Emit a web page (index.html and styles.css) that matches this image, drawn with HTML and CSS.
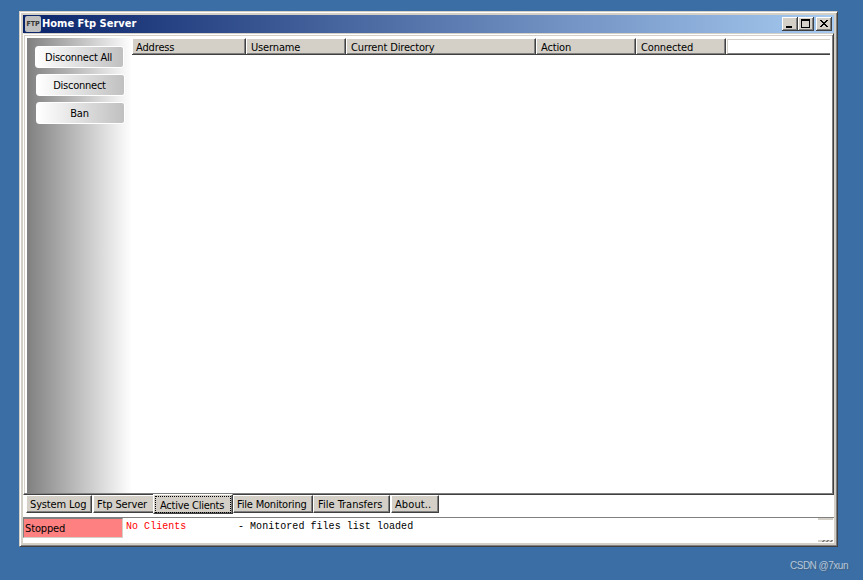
FILE: index.html
```
<!DOCTYPE html>
<html lang="en">
<head>
<meta charset="utf-8">
<title>Home Ftp Server</title>
<link rel="stylesheet" href="styles.css">
</head>
<body>
    <div class="window">
        <div class="titlebar">
            <span class="appicon">FTP</span>
            <h1>Home Ftp Server</h1>
            <button class="winbtn" aria-label="Minimize"><svg width="16" height="14" shape-rendering="crispEdges"><path d="M4 9h6v2H4z"/></svg></button>
            <button class="winbtn" aria-label="Maximize"><svg width="16" height="14" shape-rendering="crispEdges"><path d="M3 2h9v9H3zM4 4v6h7V4z" fill-rule="evenodd"/></svg></button>
            <button class="winbtn close" aria-label="Close"><svg width="16" height="14" shape-rendering="crispEdges"><path d="M4 3h2v1h1v1h2V4h1V3h2v1h-1v1h-1v1H9v1h1v1h1v1h1v1h-2V9H9V8H7v1H6v1H4V9h1V8h1V7h1V6H6V5H5V4H4z"/></svg></button>
        </div>
        <div class="panel">
            <div class="sidebar">
                <button class="sidebtn first">Disconnect All</button>
                <button class="sidebtn">Disconnect</button>
                <button class="sidebtn">Ban</button>
            </div>
            <div class="list">
                <div class="listhead">
                    <span class="col address">Address</span>
                    <span class="col username">Username</span>
                    <span class="col directory">Current Directory</span>
                    <span class="col action">Action</span>
                    <span class="col connected">Connected</span>
                    <span class="rest"></span>
                </div>
            </div>
        </div>
        <div class="tabs">
            <span class="tab log">System Log</span>
            <span class="tab server">Ftp Server</span>
            <span class="tab active"><span class="focus">Active Clients</span></span>
            <span class="tab monitoring">File Monitoring</span>
            <span class="tab transfers">File Transfers</span>
            <span class="tab about">About..</span>
        </div>
        <div class="statusbar">
            <span class="state">Stopped</span>
            <span class="clients">No Clients</span>
            <span class="message">- Monitored files list loaded</span>
            <span class="grip"><svg width="15" height="2" shape-rendering="crispEdges"><path fill="#d4d0c8" d="M0 0h15v2H0z"/><path fill="#808080" d="M4 1h2v1H4zM5 0h2v1H5zM8 1h2v1H8zM9 0h2v1H9zM12 1h2v1h-2zM13 0h2v1h-2z"/></svg></span>
        </div>
    </div>
    <div class="watermark">CSDN @7xun</div>
</body>
</html>
```

FILE: styles.css
```
*{
    margin:0;
    padding:0;
    box-sizing:border-box;
}
body{
    background:#3a6ea5;
    color:#000;
    font-family:"DejaVu Sans Condensed", "DejaVu Sans", sans-serif;
    font-stretch:condensed;
    font-size:11px;
    letter-spacing:-0.14px;
    height:580px;
    padding:11px 0 0 19px;
    overflow:hidden;
    white-space:nowrap;
}
button{
    font:inherit;
    color:inherit;
    border:none;
}
svg{
    display:block;
}
.window{
    width:819px;
    height:536px;
    background:#fff;
    border:1px solid #d4d0c8;
    border-right-color:#404040;
    border-bottom-color:#404040;
    box-shadow:inset 1px 1px #fff, inset -1px -1px #808080, inset 3px 3px #d4d0c8, inset -3px -3px #d4d0c8;
    padding:3px;
}
.titlebar{
    display:flex;
    align-items:center;
    height:18px;
    padding:0 2px;
    background:linear-gradient(to right, #0a246a, #a6caf0);
}
.appicon{
    width:16px;
    height:16px;
    border-radius:2px;
    background:#c0c0c0;
    color:#333;
    font-size:7px;
    font-weight:bold;
    line-height:16px;
    text-align:center;
}
h1{
    flex:1;
    margin-left:1px;
    color:#fff;
    font-size:11px;
    line-height:18px;
    letter-spacing:0;
}
.winbtn{
    width:16px;
    height:14px;
    background:#d4d0c8;
    box-shadow:inset -1px -1px #404040, inset 1px 1px #fff, inset -2px -2px #808080;
}
.close{
    margin-left:2px;
}
.panel{
    display:flex;
    height:462px;
    border-top:1px solid #d4d0c8;
    border-left:1px solid #fff;
    border-right:1px solid #404040;
    border-bottom:1px solid #404040;
    box-shadow:inset 0 1px #fff, inset -1px -1px #808080, inset 1px 2px #d4d0c8;
    padding:4px 3px 1px 3px;
}
.sidebar{
    display:flex;
    flex-direction:column;
    gap:6px;
    width:105px;
    padding:8px 0 0 9px;
    background:linear-gradient(to right, #808080, #fff);
}
.sidebtn{
    width:89px;
    height:22px;
    border:1px solid #fff;
    border-radius:3px;
    background:linear-gradient(to right, #fff, #c0c0c0);
    padding:1px 2px 0 0;
    letter-spacing:-0.25px;
    line-height:19px;
}
.first{
    margin-left:-1px;
}
.list{
    flex:1;
}
.listhead{
    display:flex;
    height:17px;
    border-bottom:1px solid #404040;
}
.col{
    height:16px;
    padding-left:4px;
    border-top:1px solid #fff;
    border-left:1px solid #fff;
    border-right:1px solid #404040;
    background:#d4d0c8;
    box-shadow:inset -1px -1px #808080;
    line-height:17px;
}
.address{
    width:114px;
    padding-left:3px;
}
.username{
    width:100px;
}
.directory{
    width:190px;
}
.action{
    width:100px;
}
.connected{
    width:90px;
}
.rest{
    flex:1;
    margin:1px 0 0 1px;
    border-top:1px solid #d4d0c8;
    border-left:1px solid #d4d0c8;
    border-bottom:1px solid #808080;
}
.tabs{
    display:flex;
    align-items:flex-start;
    height:22px;
    padding-left:3px;
}
.tab{
    height:18px;
    border-left:1px solid #fff;
    border-top:1px solid #fff;
    border-right:1px solid #404040;
    border-bottom:1px solid #404040;
    background:#d4d0c8;
    box-shadow:inset -1px -1px #808080;
    line-height:17px;
    padding-left:3px;
}
.log{
    width:66px;
}
.server{
    width:61px;
    margin-left:1px;
    border-right:none;
}
.active{
    width:80px;
    height:20px;
    margin-top:-1px;
    margin-left:-1px;
    padding:1px 0 0 1px;
}
.focus{
    display:block;
    width:76px;
    height:17px;
    border:1px dotted #000;
    padding-left:4px;
    letter-spacing:-0.25px;
    line-height:18px;
}
.monitoring{
    width:80px;
    letter-spacing:-0.2px;
}
.transfers{
    width:77px;
    padding-left:4px;
    letter-spacing:0;
}
.about{
    width:48px;
    margin-left:1px;
    letter-spacing:0.1px;
}
.statusbar{
    display:flex;
    height:26px;
    border-top:1px solid #808080;
}
.state{
    width:100px;
    height:20px;
    border:1px solid #808080;
    border-right-color:#d4d0c8;
    border-bottom-color:#d4d0c8;
    background:#ff8080;
    padding-left:1px;
    line-height:19px;
}
.clients, .message{
    font-family:"Liberation Mono", monospace;
    font-size:10px;
    line-height:17px;
    letter-spacing:0.04px;
}
.clients{
    width:113px;
    padding-left:3px;
    color:#f00;
}
.message{
    flex:1;
    padding-left:2px;
}
.grip{
    height:24px;
    width:15px;
    margin-right:1px;
    border-top:2px solid #d4d0c8;
    padding-top:20px;
}
.watermark{
    margin:12px 0 0 771px;
    color:#b5c7da;
    font-family:"Liberation Sans", Arial, sans-serif;
    font-size:10px;
    letter-spacing:-0.5px;
    line-height:14px;
    text-shadow:1px 1px 1px #46607c;
}
```
